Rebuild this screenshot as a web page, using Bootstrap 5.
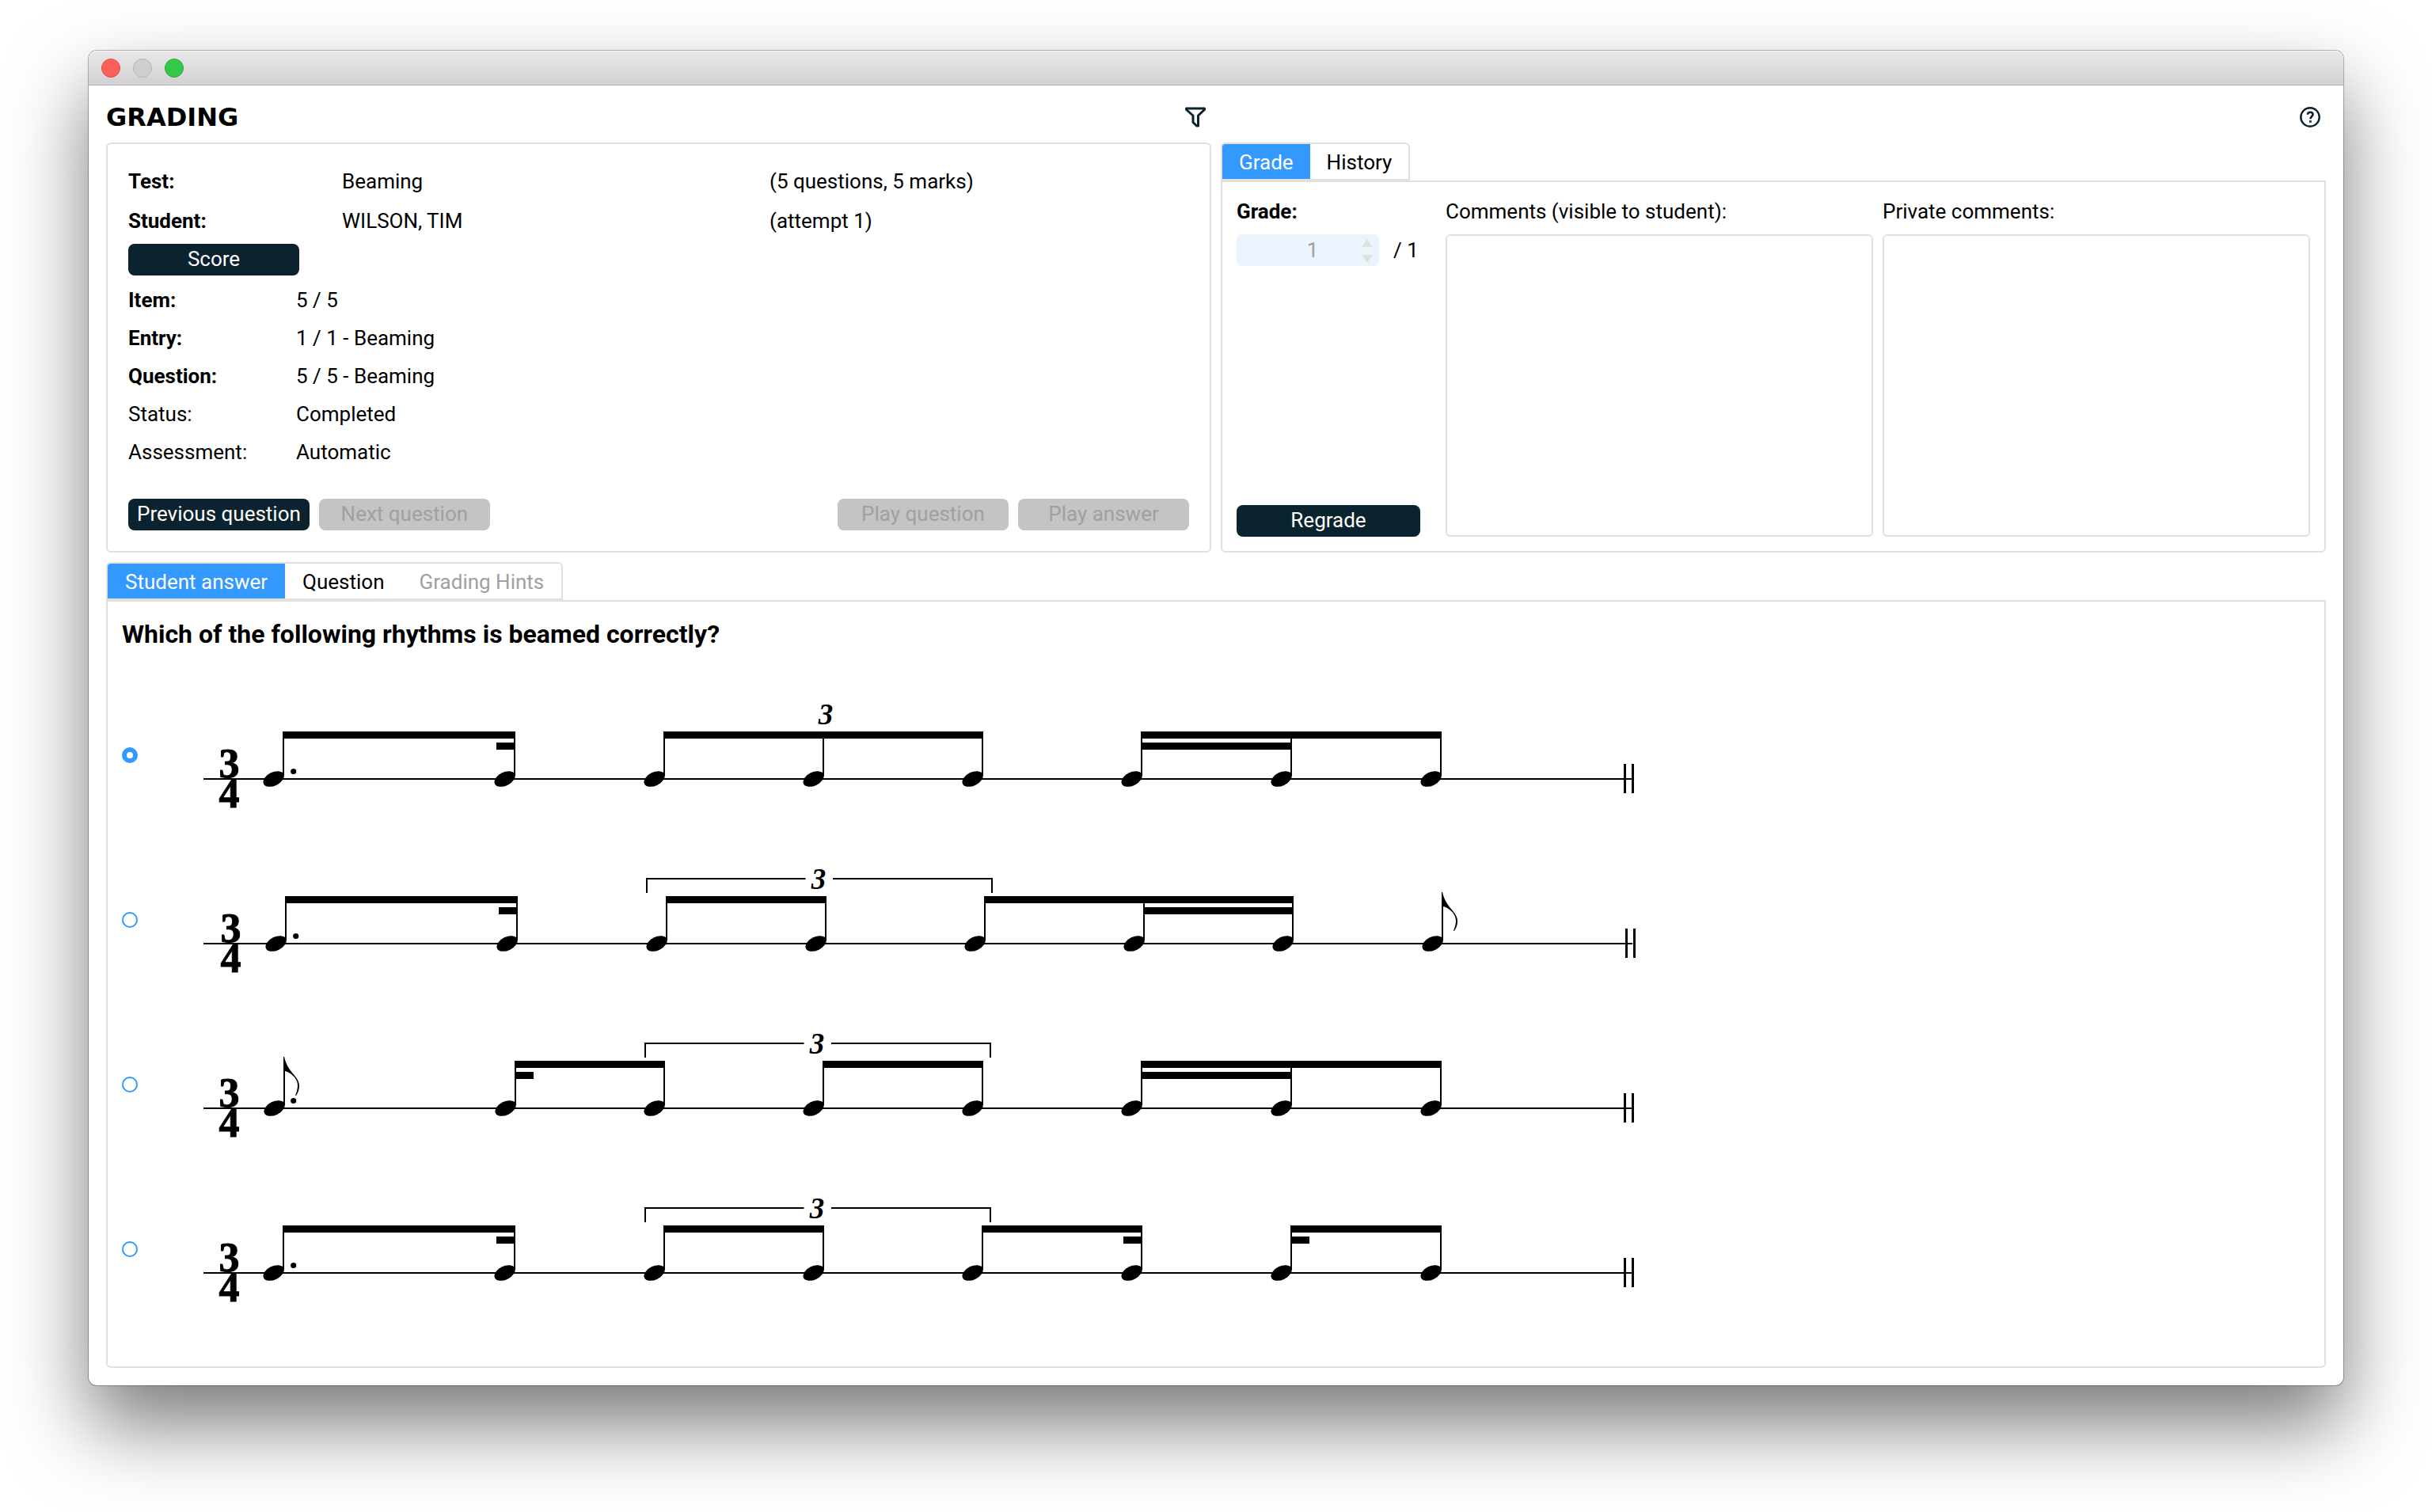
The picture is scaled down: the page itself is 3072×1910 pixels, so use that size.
<!DOCTYPE html>
<html lang="en">
<head>
<meta charset="utf-8">
<meta name="viewport" content="width=device-width, initial-scale=1">
<title>Grading</title>
<link href="https://cdn.jsdelivr.net/npm/bootstrap@5.3.0/dist/css/bootstrap.min.css" rel="stylesheet">
<style>
  :root { --line: #e2dfdf; --ink: #0a232e; --accent: #3399ff; }
  body { font-family: Roboto, "Liberation Sans", sans-serif; font-size: 26px; line-height: 48px; color: #000; background: #fff; padding: 64px 112px 160px; }
  dl, dd, dt, h1, h2 { margin: 0; }
  dt { font-weight: 700; }
  .app-window { min-height: calc(100vh - 224px); border-radius: 10px; background: #fff; box-shadow: 0 0 0 1px rgba(0,0,0,.28), 0 50px 100px rgba(0,0,0,.52); }
  .title-bar { height: 44px; padding: 0 16px; gap: 16px; border-radius: 10px 10px 0 0; background: linear-gradient(#e9e7e9, #d2d0d3); border-bottom: 1px solid #b1afb1; box-shadow: inset 0 1px 0 #f5f4f5; }
  .light { width: 24px; height: 24px; border-radius: 50%; border: 1px solid #b5b4b5; background: #d0cfd0; padding: 0; }
  .light-close { background: #fc605b; border-color: #e04b46; }
  .light-zoom { background: #34c84a; border-color: #27aa35; }
  .app-body { padding: 0 22px 22px; }
  .halves { display: grid; grid-template-columns: repeat(2, minmax(0, 1fr)); gap: 0 12px; }
  .gap-bar { gap: 12px; }
  .head-bar { height: 72px; padding: 8px 7px 0 0; }
  .page-title { font: 700 32px/40px "DejaVu Sans", sans-serif; }
  .icon-btn { border: 0; background: none; padding: 0; line-height: 0; color: var(--ink); }
  .panel { border: 2px solid var(--line); border-radius: 6px; }
  .info { padding: 22px 26px 26px; }
  .facts { display: grid; grid-template-columns: 270px 1fr 530px; line-height: 50px; }
  .details { display: grid; grid-template-columns: 212px 1fr; margin: 7px 0 35px; }
  .details .plain { font-weight: 400; }
  .act { min-width: 216px; height: 40px; padding: 0 11px 2px; border: 0; border-radius: 8px; background: var(--ink); color: #fff; line-height: 38px; }
  .act:disabled { background: #c4c4c4; color: #a0a0a0; }
  .facts + .act { margin-top: 4px; }
  .tab-strip { align-self: flex-start; border: 2px solid var(--line); border-radius: 6px 6px 0 0; overflow: hidden; }
  .tab-strip button { height: 44px; padding: 2px 21px 0; border: 0; background: none; color: #000; line-height: 42px; }
  .lower .tab-strip button { padding: 2px 22px 0; }
  .tab-strip button.active { background: var(--accent); color: #fff; }
  .tab-strip button:disabled { color: #a0a0a0; }
  .tab-body { border: 2px solid var(--line); border-radius: 0 0 6px 6px; }
  .grading { padding: 14px 18px 18px; }
  .grading label { line-height: 46px; margin-bottom: 6px; }
  .grade-col { width: 232px; margin-right: 20px; }
  .note-col { flex: 1 1 0; min-width: 0; }
  .spin { position: relative; width: 180px; }
  .spin input { width: 100%; height: 40px; padding: 0 0 0 12px; border: 0; border-radius: 6px; background: #ebf3ff; color: #a0a0a0; text-align: center; line-height: 40px; appearance: textfield; display: block; }
  .spin input::-webkit-inner-spin-button { appearance: none; }
  .spin svg { position: absolute; right: 8px; top: 6px; }
  .spin + span { margin-left: 18px; }
  .note { flex: 1 1 auto; width: 100%; border: 2px solid var(--line); border-radius: 6px; resize: none; display: block; }
  .lower { margin-top: 12px; }
  .answer { padding: 20px 18px 40px; }
  .prompt { font-size: 32px; line-height: 42px; font-weight: 700; margin-bottom: 28px; }
  .option { gap: 82px; }
  .option input { appearance: none; flex: none; width: 20px; height: 20px; margin: 0; border: 2px solid var(--accent); border-radius: 50%; background: #fff; }
  .option input:checked { border-width: 6px; }
  .score { width: 1816px; max-width: 100%; display: block; }
  .meter, .tuplet { font-family: "Liberation Serif", serif; font-weight: 700; text-anchor: middle; }
  .meter { font-size: 52px; stroke: #000; stroke-width: 1; }
  .tuplet { font-size: 37px; font-style: italic; }
</style>
</head>
<body>
<svg width="0" height="0" class="position-absolute" aria-hidden="true">
  <defs>
    <!-- Notehead with its stem at x = 0; the staff line is y = 0 -->
    <g id="note"><ellipse rx="14" ry="8.5" transform="translate(-12.4 0) rotate(-26)"/><path d="M-1-59H1V-4H-1Z"/></g>
    <path id="flag" d="M-1-65H0C2-56 6-50 10-45C16-38 19-34 19-28C19-23 17-19 15-16L14-16.500C16-21 17-25 17-29C17-37 9-45 1-47V-40H-1Z"/>
    <circle id="dot" cx="12.700" cy="-9.500" r="3.600"/>
    <path id="bars" d="M2051-19h3v37h-3ZM2061-19h3v37h-3Z"/>
    <path id="staff" d="M257-1H2062V1H257Z"/>
    <g id="meter" class="meter"><text x="289.500" y="-2">3</text><text x="289.500" y="35.500">4</text></g>
    <g id="bracket"><path d="M815-64V-82H1015.500M1050-82H1251V-64" fill="none" stroke="#000" stroke-width="2"/><text class="tuplet" x="1032" y="-69">3</text></g>
  </defs>
</svg>

<div class="app-window d-flex flex-column">
  <header class="title-bar d-flex align-items-center">
    <button class="light light-close" aria-label="Close"></button>
    <button class="light" aria-label="Minimise" disabled></button>
    <button class="light light-zoom" aria-label="Zoom"></button>
  </header>

  <main class="app-body d-flex flex-column flex-grow-1">
    <div class="halves">
      <div class="head-bar d-flex align-items-center justify-content-between">
        <h1 class="page-title">GRADING</h1>
        <button class="icon-btn" aria-label="Filter">
          <svg width="26" height="26" viewBox="0 0 26 26" fill="none" stroke="currentColor" stroke-width="3" stroke-linejoin="round"><path d="M1.500 2H24.500V3.500L16.500 11V24H14.500L10 19.500V11L1.500 3.500Z"/></svg>
        </button>
      </div>
      <div class="head-bar d-flex align-items-center justify-content-end">
        <button class="icon-btn" aria-label="Help">
          <svg width="26" height="26" viewBox="0 0 26 26" fill="none" stroke="currentColor"><circle cx="13" cy="13" r="11.700" stroke-width="2.400"/><path d="M9.900 9.800C10 7.600 11.300 6.700 13.200 6.700C15.200 6.700 16.500 7.900 16.500 9.600C16.500 12 13.400 12 13.400 15.200" stroke-width="2.600"/><path d="M12 17.200h2.800v2.600h-2.800Z" fill="currentColor" stroke="none"/></svg>
        </button>
      </div>
    </div>

    <div class="halves">
      <section class="panel info d-flex flex-column align-items-start">
        <dl class="facts w-100">
          <dt>Test:</dt><dd>Beaming</dd><dd>(5 questions, 5 marks)</dd>
          <dt>Student:</dt><dd>WILSON, TIM</dd><dd>(attempt 1)</dd>
        </dl>
        <button class="act">Score</button>
        <dl class="details w-100">
          <dt>Item:</dt><dd>5 / 5</dd>
          <dt>Entry:</dt><dd>1 / 1 - Beaming</dd>
          <dt>Question:</dt><dd>5 / 5 - Beaming</dd>
          <dt class="plain">Status:</dt><dd>Completed</dd>
          <dt class="plain">Assessment:</dt><dd>Automatic</dd>
        </dl>
        <div class="gap-bar d-flex w-100 mt-auto">
          <button class="act">Previous question</button>
          <button class="act me-auto" disabled>Next question</button>
          <button class="act" disabled>Play question</button>
          <button class="act" disabled>Play answer</button>
        </div>
      </section>

      <section class="d-flex flex-column">
        <div class="tab-strip d-flex" role="tablist">
          <button class="active" role="tab" aria-selected="true">Grade</button>
          <button role="tab" aria-selected="false">History</button>
        </div>
        <div class="tab-body grading gap-bar d-flex flex-grow-1">
          <div class="grade-col d-flex flex-column">
            <label for="grade" class="fw-bold">Grade:</label>
            <div class="d-flex align-items-center mb-auto">
              <div class="spin">
                <input id="grade" type="number" value="1" min="0" max="1" disabled>
                <svg width="14" height="30" viewBox="0 0 14 30" fill="#e2dfdf" aria-hidden="true"><path d="M7 0L14 10H0ZM7 30L14 20H0Z"/></svg>
              </div>
              <span class="lh-1">/ 1</span>
            </div>
            <button class="act">Regrade</button>
          </div>
          <div class="note-col d-flex flex-column">
            <label for="public-note">Comments (visible to student):</label>
            <textarea id="public-note" class="note"></textarea>
          </div>
          <div class="note-col d-flex flex-column">
            <label for="private-note">Private comments:</label>
            <textarea id="private-note" class="note"></textarea>
          </div>
        </div>
      </section>
    </div>

    <section class="lower d-flex flex-column flex-grow-1">
      <div class="tab-strip d-flex" role="tablist">
        <button class="active" role="tab" aria-selected="true">Student answer</button>
        <button role="tab" aria-selected="false">Question</button>
        <button role="tab" aria-selected="false" disabled>Grading Hints</button>
      </div>
      <div class="tab-body answer flex-grow-1">
        <h2 class="prompt">Which of the following rhythms is beamed correctly?</h2>

        <label class="option d-flex align-items-center">
          <input type="radio" name="rhythm" aria-label="Rhythm 1" checked>
          <svg class="score" viewBox="256 -134 1816 208">
            <use href="#staff"/><use href="#meter"/><use href="#bars"/>
            <use href="#note" x="358"/><use href="#dot" x="358"/><use href="#note" x="650"/>
            <use href="#note" x="839"/><use href="#note" x="1040"/><use href="#note" x="1241"/>
            <use href="#note" x="1442"/><use href="#note" x="1631"/><use href="#note" x="1820"/>
            <path d="M357-60H651V-51H357ZM627-46H651V-37H627ZM838-60H1242V-51H838ZM1441-60H1821V-51H1441ZM1441-46H1632V-37H1441Z"/>
            <text class="tuplet" x="1043" y="-69">3</text>
          </svg>
        </label>

        <label class="option d-flex align-items-center">
          <input type="radio" name="rhythm" aria-label="Rhythm 2">
          <svg class="score" viewBox="256 -134 1816 208">
            <use href="#staff"/><use href="#meter" x="2"/><use href="#bars" x="2"/><use href="#bracket" x="2"/>
            <use href="#note" x="361"/><use href="#dot" x="361"/><use href="#note" x="653"/>
            <use href="#note" x="842"/><use href="#note" x="1043"/><use href="#note" x="1244"/>
            <use href="#note" x="1445"/><use href="#note" x="1633"/><use href="#note" x="1822"/><use href="#flag" x="1822"/>
            <path d="M360-60H654V-51H360ZM630-46H654V-37H630ZM841-60H1044V-51H841ZM1243-60H1634V-51H1243ZM1444-46H1634V-37H1444Z"/>
          </svg>
        </label>

        <label class="option d-flex align-items-center">
          <input type="radio" name="rhythm" aria-label="Rhythm 3">
          <svg class="score" viewBox="256 -134 1816 208">
            <use href="#staff"/><use href="#meter"/><use href="#bars"/><use href="#bracket"/>
            <use href="#note" x="359"/><use href="#dot" x="358"/><use href="#flag" x="359"/><use href="#note" x="651"/>
            <use href="#note" x="839"/><use href="#note" x="1040"/><use href="#note" x="1241"/>
            <use href="#note" x="1442"/><use href="#note" x="1631"/><use href="#note" x="1820"/>
            <path d="M650-60H840V-51H650ZM650-46H674V-37H650ZM1039-60H1242V-51H1039ZM1441-60H1821V-51H1441ZM1441-46H1632V-37H1441Z"/>
          </svg>
        </label>

        <label class="option d-flex align-items-center">
          <input type="radio" name="rhythm" aria-label="Rhythm 4">
          <svg class="score" viewBox="256 -134 1816 208">
            <use href="#staff"/><use href="#meter"/><use href="#bars"/><use href="#bracket"/>
            <use href="#note" x="358"/><use href="#dot" x="358"/><use href="#note" x="650"/>
            <use href="#note" x="839"/><use href="#note" x="1040"/><use href="#note" x="1241"/>
            <use href="#note" x="1442"/><use href="#note" x="1631"/><use href="#note" x="1820"/>
            <path d="M357-60H651V-51H357ZM627-46H651V-37H627ZM838-60H1041V-51H838ZM1240-60H1443V-51H1240ZM1419-46H1443V-37H1419ZM1630-60H1821V-51H1630ZM1630-46H1654V-37H1630Z"/>
          </svg>
        </label>
      </div>
    </section>
  </main>
</div>
<script src="https://cdn.jsdelivr.net/npm/bootstrap@5.3.0/dist/js/bootstrap.bundle.min.js"></script>
</body>
</html>
